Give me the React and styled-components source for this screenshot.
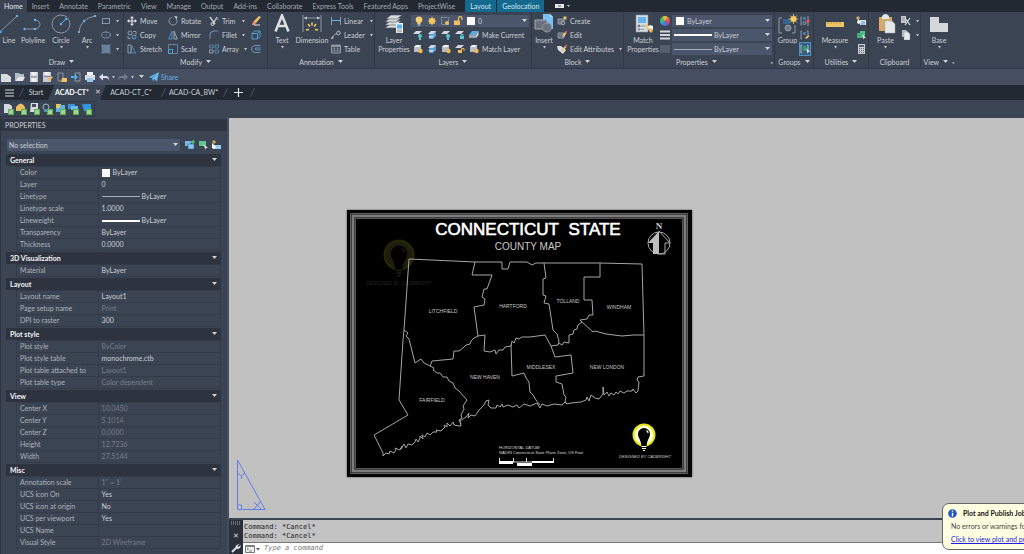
import React from 'react'
import styled, { createGlobalStyle, css } from 'styled-components'


/* every glyph is [box size, drawing] */
const glyphs = {
    line: [20, <><path d="M1 18 18 2" stroke="#8d96a3" fill="none"/><circle cx="1.5" cy="18" r="1.2" fill="#5fb2ec"/><circle cx="18" cy="2" r="1.2" fill="#5fb2ec"/></>],
    polyline: [20, <><path d="M1 15h11a5 4.5 0 0 0 0-9" stroke="#8d96a3" fill="none"/><g fill="#5fb2ec"><circle cx="1.5" cy="15" r="1.2"/><circle cx="12" cy="15" r="1.2"/><circle cx="12" cy="6" r="1.2"/></g></>],
    circle: [20, <><circle cx="10" cy="10" r="9" stroke="#8d96a3" fill="none"/><path d="m10 10 5-5" stroke="#5fb2ec"/><circle cx="10" cy="10" r="1.2" fill="#5fb2ec"/><circle cx="15" cy="5" r="1.2" fill="#5fb2ec"/></>],
    arc: [20, <><path d="M2 18Q3 5 18 2" stroke="#8d96a3" fill="none"/><g fill="#5fb2ec"><circle cx="2" cy="18" r="1.2"/><circle cx="7" cy="7" r="1.2"/><circle cx="18" cy="2" r="1.2"/></g></>],
    rect: [10, <><path d="M1.500 2.500h7v5h-7z" stroke="#8d96a3" fill="none"/><path d="M1 7h1v1H1zM8 2h1v1H8z" fill="#5fb2ec"/></>],
    ellipse: [10, <><ellipse cx="5" cy="5" rx="4.300" ry="3" stroke="#7d93a8" fill="none"/><path d="M4.500 4.500h1v1h-1zM9 4.500h1v1H9zM4.500 1.500h1v1h-1z" fill="#5fb2ec"/></>],
    hatch: [10, <><path d="M1 1h8v8H1z" fill="#55779b"/><path d="M1 3h8M1 5h8M1 7h8M3 1v8M5 1v8M7 1v8" stroke="#8090a3" strokeWidth=".5"/><path d="M0 1h10M0 9h10M1 0v10M9 0v10" stroke="#76879c" strokeWidth=".5"/></>],
    move: [10, <path d="M5 0 7 2.300H5.600v2.100h2.100V3L10 5 7.700 7V5.600H5.600v2.100H7L5 10 3 7.700h1.400V5.600H2.300V7L0 5l2.300-2v1.400h2.100V2.300H3z" fill="#e0e3e7"/>],
    copy: [10, <g fill="none"><circle cx="3" cy="3" r="2" stroke="#929ca8"/><circle cx="7" cy="7" r="2" stroke="#61a5d6"/><path d="M6 1.500h3v3M1 6v2.500h2.500" stroke="#929ca8"/></g>],
    stretch: [10, <g fill="none"><path d="M1 1h3v8H1z" stroke="#929ca8"/><path d="M4.500 1.500 8.500 9h-4z" stroke="#4f8dbb"/></g>],
    rotate: [10, <><path d="M8.500 3A4 4 0 1 1 4 1.200" stroke="#929ca8" fill="none"/><path d="m6 0 3.500.5-1 3z" fill="#c2c8d0"/></>],
    mirror: [10, <g fill="none"><path d="M4 1v8H.7z" stroke="#4f8dbb"/><path d="M6 1v8h3.300z" stroke="#a2abb6"/></g>],
    scale: [10, <g fill="none"><path d="M.5 5V.5h9v9H5" stroke="#62829f"/><path d="M.5 5.500h4v4h-4z" stroke="#55aae4"/></g>],
    trim: [10, <><path d="m1 1 5 7M8 1 4 8" stroke="#c2c8d0" strokeWidth="1.500"/><path d="M6 3h4" stroke="#8d96a3"/><circle cx="3.500" cy="8" r="1.500" stroke="#d8dce1" fill="none"/></>],
    fillet: [10, <><path d="M1 9V5q0-4 4-4h4" stroke="#75869a" fill="none"/><path d="M1 5q0-4 4-4" stroke="#5296c6" fill="none"/></>],
    array: [10, <g fill="none"><path d="M.5 1h3.500v3H.5zM6 1h3.500v3H6zM6 6h3.500v3H6z" stroke="#5684a8"/><path d="M.5 6h3.500v3H.5z" stroke="#949eab"/></g>],
    eraser: [10, <><path d="M2 6 8 0l2 1-5 6z" fill="#f0c064"/><path d="M1 7.500 3 5.500l2 1.700L3.500 9H1z" fill="#e88577"/><path d="M3 9h6" stroke="#e6e8eb"/></>],
    box: [10, <path d="M1 3.500h5.500V9H1zM1 3.500 3.500 1H9L6.500 3.500M9 1v5.500L6.500 9" stroke="#54a0d3" fill="none"/>],
    offset: [10, <path d="M9.500 1.500H4a3.500 3.500 0 0 0 0 7h5.500M9.500 4H5a1 1 0 0 0 0 2h4.500" stroke="#6b94b5" fill="none"/>],
    bigA: [20, <path d="m3.500 17.500 6.500-16 6.500 16M6 12h8" stroke="#dcdee1" strokeWidth="2.600" fill="none"/>],
    dimension: [20, <><path d="M1 1v17M19 1v17M2 4h16" stroke="#9098a4" fill="none"/><path d="m2 4 3-1.500v3zM18 4l-3-1.500v3z" fill="#c9ced4"/><path d="m4 16 3-.5M6 10l2 2.500M10 8.500v3M14 10l-2 2.500M16 16l-3-.5" stroke="#f2c75f" strokeWidth="1.600"/></>],
    linear: [10, <><path d="M.5 1v8M9.500 1v8" stroke="#929ca8"/><path d="M1 4.500h8" stroke="#5fb2ec"/></>],
    leader: [10, <><path d="M1 8 4 4h2" stroke="#929ca8" fill="none"/><circle cx="7.500" cy="3" r="1.800" stroke="#b6bcc5" fill="none"/><path d="M0 9.500 1 6l2 2z" fill="#b6bcc5"/></>],
    table: [10, <><path d="M.5 1h9v8h-9z" stroke="#8e98a5" fill="none"/><path d="M.5 1h9v2h-9z" fill="#8e98a5"/><path d="M.5 5h9M.5 7h9M3.500 3v6M6.500 3v6" stroke="#8e98a5" strokeWidth=".7"/></>],
    layers: [20, <><g fill="#d9dcdf" stroke="#4a5260" strokeWidth=".6"><path d="m1 14 5-4h11l-5 4z"/><path d="m1 11 5-4h11l-5 4z"/><path d="m1 8 5-4h11l-5 4z"/><path d="m2 5 5-4h11l-5 4z"/></g><path d="M12 9h7v10h-7z" fill="#eef0f2"/><path d="M13 10.500h5v4h-5z" fill="#55aef2"/><path d="M13 16h5M13 17.800h5" stroke="#7d8590" strokeWidth=".8"/></>],
    bulb: [10, <><circle cx="5" cy="3.700" r="3.300" fill="#f7cd71"/><path d="M3.500 6.500h3V8h-3z" fill="#f7cd71"/><path d="M3.500 9h3" stroke="#e3e6ea"/></>],
    sun: [10, <><circle cx="5" cy="5" r="3" fill="#f7c960"/><path d="M5 .5v9M.5 5h9M2 2l6 6M8 2 2 8" stroke="#f7c960" strokeWidth=".8"/></>],
    freeze: [10, <><path d="M1.500 1.500h7v7h-7z" stroke="#929ca8" fill="none" strokeDasharray="2 1"/><circle cx="7" cy="7" r="2" fill="#f2b763"/></>],
    unlock: [10, <><path d="M1 4.500h6V9H1z" fill="#f4bd66"/><path d="M5.500 4.500V2.300a1.700 1.700 0 0 1 3.400 0V4" stroke="#f4bd66" strokeWidth="1.200" fill="none"/></>],
    white: [10, <path d="M1 1h8v8H1z" fill="#fff"/>],
    layerCyan: [10, <><path d="m0 4 3-3h6L6 4z" fill="#d5d9dd"/><circle cx="7" cy="6" r="2" fill="#58c4cf"/><path d="M6 8h2v2H6z" fill="#58c4cf"/></>],
    layerBlue: [10, <><path d="M2 3 5 1h4v5L6 9H2z" fill="#5c9fd6"/><path d="m1 4 3-3h5L6 4zM1 7l2-1h4L5 8z" fill="#d5d9dd"/></>],
    layerLock: [10, <><path d="m0 4 3-3h6L6 4z" fill="#d5d9dd"/><path d="M5 6h4v3H5z" fill="#58c4cf"/><path d="M6 6V4.500h2V6" stroke="#58c4cf" fill="none"/></>],
    layerSun: [10, <><path d="m1 3 2-2h5v5L6 8H1z" fill="#b7bdc5"/><path d="m1 3 2-2h5L6 3z" fill="#eff1f3"/><circle cx="7.500" cy="7" r="2.200" fill="#f2b757"/></>],
    layerOpen: [10, <><path d="m0 4 3-3h6L6 4z" fill="#d5d9dd"/><path d="M3 6h4v3H3z" fill="#f2b757"/><path d="M6.500 6V4.500h2.500V7" stroke="#f2b757" fill="none"/></>],
    current: [10, <><path d="m0 5 3-4h6.500L7 5z" fill="#5ba7df"/><path d="M0 5h7v3H0z" fill="#9ba3ae"/><path d="m7 5 2.500-4v4L7 8z" fill="#d0d4d9"/></>],
    insert: [20, <><path d="M9 0h7l3 3v12H9z" fill="#7cc1f4"/><path d="M16 0v3h3z" fill="#b6def8"/><path d="M1 6h12v9H1z" fill="#69717e" stroke="#a4abb4"/><circle cx="13" cy="13.500" r="4.500" fill="#69717e" stroke="#929aa5"/></>],
    create: [10, <><path d="M1 3h6v5H1z" fill="#6c7582" stroke="#8d96a3"/><circle cx="6" cy="7" r="1.800" stroke="#a4abb4" fill="#515b69"/><path d="M8 0v4M6 2h4M6.700.7l2.600 2.600M9.300.7 6.700 3.300" stroke="#f4c767" strokeWidth=".9"/></>],
    edit: [10, <><path d="M1 3h6v5H1z" fill="#6c7582" stroke="#8d96a3"/><path d="m5 6 3-4 1.500 1L7 7z" fill="#f2c572"/><path d="m8 2 1-1.500L10.500 2l-1 1z" fill="#e45b4e"/></>],
    attributes: [10, <><path d="M0 2h4l5 4-3 4-5-4z" fill="#d9dde1"/><path d="m4 7 4-5 1.500 1-4 5z" fill="#f2c572"/><path d="m8 2 1-2 1.500 1-1 2z" fill="#e45b4e"/></>],
    match: [20, <><path d="M3 1h12v17H3z" fill="#d7dade" stroke="#8d949e" strokeWidth=".6"/><path d="M5 3h8v6H5z" fill="#66b4ef"/><path d="M5 11h2v2H5zM5 15h2v1H5zM8 12h5M8 15.500h3" fill="#70808f" stroke="#70808f" strokeWidth=".7"/><path d="m12 12 2-2 6 7-2 2z" fill="#efc261"/><path d="m14 13 3-2 3 1v4z" fill="#f1f2f3"/></>],
    lines: [10, <path d="M0 1.500h10M0 5h10M0 8.500h10" stroke="#d4d8dc" strokeWidth="2"/>],
    linetypes: [10, <path d="M0 2h10M0 4h10M0 6h10M0 8h10" stroke="#6f7987"/>],
    group: [20, <><path d="M4 4H1v15h3M14 19h3v-8" stroke="#929ca8" fill="none"/><path d="M5 5h7v5H5z" fill="#32658f"/><circle cx="10" cy="14" r="3" fill="#727b87" stroke="#929ca8"/><circle cx="15.500" cy="5" r="3" fill="#f6cb66"/><path d="M15.500 0v10M10.500 5h9.500M12 1.500l7 7M19 1.500l-7 7" stroke="#f6cb66" strokeWidth=".8"/></>],
    ungroup: [10, <><path d="M2 1H1v8h1" stroke="#929ca8" fill="none"/><path d="M3 1h3v3H3z" fill="#417ba8"/><circle cx="4.500" cy="7" r="1.500" stroke="#929ca8" fill="none"/><path d="M8 0v10" stroke="#929ca8"/><circle cx="8" cy="5" r="1.700" fill="#da5757"/></>],
    groupEdit: [10, <><path d="M2 1H1v8h1M7 1h1v5" stroke="#929ca8" fill="none"/><path d="M3 2h3v3H3z" fill="#417ba8"/><path d="m5 8 3-3 1.500 1-3 3z" fill="#f2b961"/></>],
    groupOn: [10, <><path d="M2 1H1v8h1M7 1h1v6" stroke="#b1bbc7" fill="none"/><path d="M3 2h3v5H3z" fill="#3a9b66"/><path d="m6 4 4 4H8v2z" fill="#fff"/></>],
    ruler: [20, <><path d="M1 8h18v5H1z" fill="#edc466"/><path d="M3 8v2M6 8v2M9 8v2M12 8v2M15 8v2" stroke="#a98639" strokeWidth=".7"/></>],
    point: [10, <><path d="M4 4h6v5H4z" fill="#dbe7f3"/><path d="M5 6h4M5 8h4" stroke="#4c90cc"/><path d="M0 2h4M2 0v4" stroke="#f3c563"/><path d="m2 3 3 3-2 2-2-1z" fill="#fff"/></>],
    quick: [10, <><path d="M1 3h6v5H1z" fill="#45b078"/><path d="M4 1h5v5H7V3H4z" fill="#4cc58a"/><path d="m6 4 4 4H8v2z" fill="#e9edf0"/></>],
    calc: [10, <><path d="M2 0h7v10H2z" fill="#c8ccd1"/><path d="M3 1h5v2H3zM3 4h1v1H3zM5 4h1v1H5zM7 4h1v1H7zM3 6h1v1H3zM5 6h1v1H5zM7 6h1v1H7zM3 8h1v1H3zM5 8h1v1H5zM7 8h1v1H7z" fill="#5e6672"/></>],
    paste: [20, <><path d="M3 3h13v14H3z" fill="#d4a96b"/><path d="M6 2q3.500-4 7 0v3H6z" fill="#e4e6e8"/><path d="M9 7h7l3 3v9H9z" fill="#e6e7e9" stroke="#a9afb7" strokeWidth=".5"/></>],
    cut: [10, <><path d="M0 0h5v7H0z" fill="#c6cad0"/><path d="m4 2 5 7M9 2 4 9" stroke="#dfe2e6" strokeWidth="1.200"/><path d="M1 2h3M1 4h3" stroke="#68717d" strokeWidth=".6"/></>],
    copyClip: [10, <><path d="M1 0h4l2 2v5H1z" fill="#b9bec5"/><path d="M3 2h4l2 2v6H3z" fill="#e6e8ea" stroke="#8c949e" strokeWidth=".4"/></>],
    base: [20, <path d="M1 3h9v6h9v9H1z" fill="#d5d8db"/>],
    newDoc: [10, <path d="M0 2h6l4 3v5H0z" fill="#d8dbdf"/>],
    open: [10, <><path d="M0 1h4l1 1h4v3H3L0 9z" fill="#b6bcc4"/><path d="M3 5h7L8 9H0z" fill="#e4e7ea"/></>],
    save: [10, <><path d="M1 0h8v10H1z" fill="#c6cbd1"/><path d="M2.500 0h5v3.500h-5zM2.500 6h5v4h-5z" fill="#eceef0"/><path d="M2 5h6" stroke="#818995"/></>],
    saveAs: [10, <><path d="M0 0h8v10H0z" fill="#c6cbd1"/><path d="M1.500 0h5v3h-5z" fill="#eceef0"/><path d="M1 4.500h6" stroke="#818995"/><path d="m4 8 4-4 2 1.500-4 4z" fill="#eeb767"/></>],
    mobileOpen: [10, <><path d="M1 1h5v8H1z" stroke="#8e98a4" fill="none"/><path d="M5 6h5v4H4z" fill="#efc365"/></>],
    mobileSave: [10, <><path d="M4 1h5v8H4z" stroke="#8e98a4" fill="none"/><path d="M0 4h4V2l3 3-3 3V6H0z" fill="#52ace7"/></>],
    print: [10, <><path d="M2 0h6v3H2z" fill="#eff1f3"/><path d="M0 3h10v5H0z" fill="#d9dce0"/><path d="M2 6h6v4H2z" fill="#92c9ee"/></>],
    undo: [10, <path d="M0 5 4 1.500V4h3q3 0 3 4-1-2-3-2H4v2.500z" fill="#dde0e4"/>],
    redo: [10, <path d="M10 5 6 1.500V4H3Q0 4 0 8q1-2 3-2h3v2.500z" fill="#727b8c"/>],
    send: [10, <path d="M0 5 10 0 8 9.500 5 7 4 9.500 3 6l5-4-6 4z" fill="#65b9ee"/>],
    grip: [10, <path d="M0 2h10M0 4h10" stroke="#a9afb8" strokeDasharray="1 1"/>],
    wrench: [10, <><path d="m1 9 4-4" stroke="#dfe2e6" strokeWidth="2"/><path d="m8.500 1-2 2 1 1 2-2c.6 2.500-1.200 4.200-3.500 4-2.300-.6-2.500-4 2.500-5z" fill="#dfe2e6"/></>],
    addSel: [10, <><path d="M0 1h6v5H0z" fill="#78b8ea"/><path d="M3 4h6v5H3z" fill="#86c7f5" stroke="#3b5675" strokeWidth=".5"/><path d="M6 2h4M8 0v4" stroke="#54c278" strokeWidth="1.300"/></>],
    pick: [10, <><path d="M1 1h7v5H1z" fill="#61c489"/><path d="m5 4 5 4H8v2z" fill="#e8ebee"/></>],
    ucs: [10, <><path d="M3 5h7v4H3z" fill="#9bc8ee"/><path d="M3 0v4M1 2h4" stroke="#efbd60"/><path d="m1 3 4 4-2 2-2-1z" fill="#fff"/></>],
    tbNew: [12, <><path d="M1 1h5l3 2v7H1z" fill="#d5d9df"/><path d="M5 6h6v6H5z" fill="#5aac50"/><path d="M6 8h4M6 10h4" stroke="#e5f6df"/></>],
    tbGold: [12, <><path d="M0 4q5-7 9 0v4H0z" fill="#efbd61"/><path d="M5 6h6v6H5z" fill="#5aac50"/><path d="M6 8h4M6 10h4" stroke="#e5f6df"/></>],
    tbPlot: [12, <><path d="M2 0h7v9H1z" fill="#d7dade"/><path d="M3 1h4v3H3z" fill="#46505c"/><path d="M5 6h6v6H5z" fill="#5aac50"/><path d="M6 8h4M6 10h4" stroke="#e5f6df"/></>],
    tbLens: [12, <><circle cx="4" cy="4" r="3" stroke="#9db5cc" fill="none"/><path d="M2 6h5v3H2z" fill="#538fc3"/><path d="M5 6h6v6H5z" fill="#5aac50"/><path d="M6 8h4M6 10h4" stroke="#e5f6df"/></>],
    tbPair: [12, <><path d="M1 1h5v4H1z" fill="#e3c85c"/><path d="M5 2h5v4H5zM1 5h4v4H1z" fill="#62aee7"/><path d="M5 6h6v6H5z" fill="#5aac50"/><path d="M6 8h4M6 10h4" stroke="#e5f6df"/></>],
    tbBlue: [12, <><path d="M0 1h7v5H0z" fill="#3992d8"/><path d="M3 3h7v4H3z" fill="#69b8ee"/><path d="M5 6h6v6H5z" fill="#5aac50"/><path d="M6 8h4M6 10h4" stroke="#e5f6df"/></>],
    tbScreen: [12, <><path d="M1 1h9v7H3z" fill="#2d96df"/><path d="M5 6h6v6H5z" fill="#5aac50"/><path d="M6 8h4M6 10h4" stroke="#e5f6df"/></>],
}

function Icon({ name }) {
    const [size, drawing] = glyphs[name]
    return <Glyph width={size} height={size} viewBox={`0 0 ${size} ${size}`} aria-hidden="true">{drawing}</Glyph>
}

function Caret() {
    return <Glyph width="5" height="4" viewBox="0 0 5 4" aria-hidden="true"><path d="M0 0h5L2.500 3z" fill="#d0d4d9"/></Glyph>
}

function DotCaret() {
    return <Glyph width="3" height="3" viewBox="0 0 3 3" aria-hidden="true"><path d="M0 0h3L1.500 2.500z" fill="#c0c5cc"/></Glyph>
}

function BigTool({ icon, lines, width, menu }) {
    return (
        <BigButton $width={width}>
            <Icon name={icon}/>
            <BigLabel>{lines.map(l => <span key={l}>{l}</span>)}</BigLabel>
            {menu && <DotCaret/>}
        </BigButton>
    )
}

function Tool({ icon, label, menu, title, active }) {
    return (
        <SmallButton aria-label={label ? undefined : title} $active={active}>
            <Icon name={icon}/>
            {label && <span>{label}</span>}
            {menu && <MenuMark><DotCaret/></MenuMark>}
        </SmallButton>
    )
}

function Panel({ title, width, pad, menu = true, launcher, children }) {
    return (
        <RibbonPanel $width={width}>
            <PanelBody $pad={pad}>{children}</PanelBody>
            <PanelTitle>
                {title}{menu && <Caret/>}
                {launcher && <Launcher>▪</Launcher>}
            </PanelTitle>
        </RibbonPanel>
    )
}

const ribbonTabs = ['Home', 'Insert', 'Annotate', 'Parametric', 'View', 'Manage', 'Output', 'Add-ins',
    'Collaborate', 'Express Tools', 'Featured Apps', 'ProjectWise']
const contextTabs = ['Layout', 'Geolocation']

function Ribbon() {
    return (
        <RibbonArea>
            <Panel title="Draw" width={124} pad={0}>
                <BigTool icon="line" lines={['Line']} width={18}/>
                <BigTool icon="polyline" lines={['Polyline']} width={30}/>
                <BigTool icon="circle" lines={['Circle']} width={26} menu/>
                <BigTool icon="arc" lines={['Arc']} width={26} menu/>
                <Column>
                    <Tool icon="rect" title="Rectangle" menu/>
                    <Tool icon="ellipse" title="Ellipse" menu/>
                    <Tool icon="hatch" title="Hatch" menu/>
                </Column>
            </Panel>
            <Panel title="Modify" width={144} pad={2}>
                <ModifyGrid>
                    <Tool icon="move" label="Move"/>
                    <Tool icon="rotate" label="Rotate"/>
                    <Tool icon="trim" label="Trim" menu/>
                    <Tool icon="eraser" title="Erase"/>
                    <Tool icon="copy" label="Copy"/>
                    <Tool icon="mirror" label="Mirror"/>
                    <Tool icon="fillet" label="Fillet" menu/>
                    <Tool icon="box" title="Explode"/>
                    <Tool icon="stretch" label="Stretch"/>
                    <Tool icon="scale" label="Scale"/>
                    <Tool icon="array" label="Array" menu/>
                    <Tool icon="offset" title="Offset"/>
                </ModifyGrid>
            </Panel>
            <Panel title="Annotation" width={107} pad={2}>
                <BigTool icon="bigA" lines={['Text']} width={24} menu/>
                <BigTool icon="dimension" lines={['Dimension']} width={36}/>
                <Column>
                    <Tool icon="linear" label="Linear" menu/>
                    <Tool icon="leader" label="Leader" menu/>
                    <Tool icon="table" label="Table"/>
                </Column>
            </Panel>
            <Panel title="Layers" width={157} pad={3}>
                <BigTool icon="layers" lines={['Layer', 'Properties']} width={32}/>
                <Column $gap={1} $grow>
                    <Field>
                        <FieldIcons>
                            <Icon name="bulb"/><Icon name="sun"/><Icon name="freeze"/><Icon name="unlock"/><Icon name="white"/>
                        </FieldIcons>
                        <Select aria-label="Current layer"><option>0</option></Select>
                        <Caret/>
                    </Field>
                    <LayerRow>
                        <Tool icon="layerCyan" title="Off"/>
                        <Tool icon="layerBlue" title="Isolate"/>
                        <Tool icon="layerCyan" title="Freeze"/>
                        <Tool icon="layerLock" title="Lock"/>
                        <Tool icon="current" label="Make Current"/>
                    </LayerRow>
                    <LayerRow>
                        <Tool icon="layerSun" title="Turn all layers on"/>
                        <Tool icon="layerBlue" title="Unisolate"/>
                        <Tool icon="layerSun" title="Thaw all layers"/>
                        <Tool icon="layerOpen" title="Unlock"/>
                        <Tool icon="layerSun" label="Match Layer"/>
                    </LayerRow>
                </Column>
            </Panel>
            <Panel title="Block" width={92} pad={2}>
                <BigTool icon="insert" lines={['Insert']} width={20} menu/>
                <Column $gap={2}>
                    <Tool icon="create" label="Create"/>
                    <Tool icon="edit" label="Edit"/>
                    <Tool icon="attributes" label="Edit Attributes" menu/>
                </Column>
            </Panel>
            <Panel title="Properties" width={151} pad={3} launcher>
                <BigTool icon="match" lines={['Match', 'Properties']} width={32}/>
                <Column $gap={1} $grow>
                    <PropLine>
                        <ColorWheel/>
                        <Field>
                            <FieldIcons><Icon name="white"/></FieldIcons>
                            <Select aria-label="Object color"><option>ByLayer</option></Select>
                            <Caret/>
                        </Field>
                    </PropLine>
                    <PropLine>
                        <Icon name="lines"/>
                        <Field>
                            <Rule $thick/>
                            <Select aria-label="Lineweight"><option>ByLayer</option></Select>
                            <Caret/>
                        </Field>
                    </PropLine>
                    <PropLine>
                        <Icon name="linetypes"/>
                        <Field>
                            <Rule/>
                            <Select aria-label="Linetype"><option>ByLayer</option></Select>
                            <Caret/>
                        </Field>
                    </PropLine>
                </Column>
            </Panel>
            <Panel title="Groups" width={39} pad={2}>
                <BigTool icon="group" lines={['Group']} width={21}/>
                <Column $gap={1}>
                    <Tool icon="ungroup" title="Ungroup"/>
                    <Tool icon="groupEdit" title="Group edit"/>
                    <Tool icon="groupOn" title="Group selection" active/>
                </Column>
            </Panel>
            <Panel title="Utilities" width={55} pad={5}>
                <BigTool icon="ruler" lines={['Measure']} width={32} menu/>
                <Column $gap={4}>
                    <Tool icon="point" title="ID point"/>
                    <Tool icon="quick" title="Quick select"/>
                    <Tool icon="calc" title="Calculator"/>
                </Column>
            </Panel>
            <Panel title="Clipboard" width={52} pad={6} menu={false}>
                <BigTool icon="paste" lines={['Paste']} width={21} menu/>
                <Column $gap={4}>
                    <Tool icon="cut" title="Cut" menu/>
                    <Tool icon="copyClip" title="Copy clip" menu/>
                </Column>
            </Panel>
            <Panel title="View" width={36} pad={6} launcher>
                <BigTool icon="base" lines={['Base']} width={24} menu/>
            </Panel>
        </RibbonArea>
    )
}

const sections = [
    { name: 'General', rows: [
        ['Color', 'ByLayer', 'swatch'], ['Layer', '0'], ['Linetype', 'ByLayer', 'thin'], ['Linetype scale', '1.0000'],
        ['Lineweight', 'ByLayer', 'thick'], ['Transparency', 'ByLayer'], ['Thickness', '0.0000']] },
    { name: '3D Visualization', rows: [['Material', 'ByLayer']] },
    { name: 'Layout', rows: [['Layout name', 'Layout1'], ['Page setup name', 'Print', 'dim'], ['DPI to raster', '300']] },
    { name: 'Plot style', rows: [
        ['Plot style', 'ByColor', 'dim'], ['Plot style table', 'monochrome.ctb'],
        ['Plot table attached to', 'Layout1', 'dim'], ['Plot table type', 'Color dependent', 'dim']] },
    { name: 'View', rows: [
        ['Center X', '10.0450', 'dim'], ['Center Y', '5.1014', 'dim'], ['Center Z', '0.0000', 'dim'],
        ['Height', '12.7236', 'dim'], ['Width', '27.5144', 'dim']] },
    { name: 'Misc', rows: [
        ['Annotation scale', '1" = 1\'', 'dim'], ['UCS icon On', 'Yes'], ['UCS icon at origin', 'No'],
        ['UCS per viewport', 'Yes'], ['UCS Name', ''], ['Visual Style', '2D Wireframe', 'dim']] },
]

function Properties() {
    return (
        <Palette>
            <PaletteTitle>PROPERTIES</PaletteTitle>
            <Picker>
                <Field>
                    <Select aria-label="Selection"><option>No selection</option></Select>
                    <Caret/>
                </Field>
                <Tool icon="addSel" title="Toggle pickadd"/>
                <Tool icon="pick" title="Select objects"/>
                <Tool icon="ucs" title="Quick select"/>
            </Picker>
            <Sections>
                {sections.map(s => (
                    <section key={s.name}>
                        <SectionHead>{s.name}<Caret/></SectionHead>
                        <PropTable>
                            <tbody>
                                {s.rows.map(([label, value, kind]) => (
                                    <tr key={label}>
                                        <th scope="row">{label}</th>
                                        <Value $dim={kind === 'dim'}>
                                            <ValueLine>
                                                {kind === 'swatch' && <Swatch/>}
                                                {kind === 'thin' && <Rule/>}
                                                {kind === 'thick' && <Rule $thick/>}
                                                {value}
                                            </ValueLine>
                                        </Value>
                                    </tr>
                                ))}
                            </tbody>
                        </PropTable>
                    </section>
                ))}
            </Sections>
        </Palette>
    )
}

const counties = [
    ['LITCHFIELD', 443, 313], ['HARTFORD', 513, 308], ['TOLLAND', 568, 303], ['WINDHAM', 619, 309],
    ['NEW HAVEN', 485, 379], ['MIDDLESEX', 541, 369], ['NEW LONDON', 607, 369], ['FAIRFIELD', 432, 402],
]

// state outline first, then the coast and the county lines
const borders = [
    'M383 456V453L374 435L408 415L399 400L403 340L404 330L409 259L475 262H502V269L508 269L510 262H527L532 265L536 263L600 263L642 264L644 335V376L638 377L637 380L639 382L638 391',
    'M383 456L386 453L389 454L390 451L394 453L396 450L395 448L400 450L402 446L401 449L404 444L406 448L408 444L412 445L415 442L416 439L418 442L420 438L420 436L423 439L422 435L425 437L427 433L430 435L433 432L437 432L436 430L441 431L445 427L444 425L447 427L447 423L450 426L453 422L454 425L459 426H461L460 421L466 417L469 413L468 418L471 415L475 416L479 410L484 405L486 401L489 400L488 405L491 408L496 408L497 405L500 407L502 404L503 407L508 405L513 407L517 405L519 408L524 404L530 406L537 403L540 408L542 404L547 406L554 404L562 405L565 402L567 404L571 403L581 402L586 400L587 397L589 401L591 395L595 398L599 399L603 394V387L604 395L607 392L609 396L611 393L614 395L616 392L618 394L620 391L624 393L627 391L632 391L633 389L636 393L638 391',
    'M475 262L472 275H492L487 289L484 289L482 297L485 299L484 305L474 307L478 336L485 335L484 351L490 352L495 350L496 354L499 350L503 350L505 347L511 346L512 341L514 343L516 338L519 339L522 337L530 337L545 335L551 346L555 357L571 355L573 373L556 376V382L562 384L564 395L566 397L565 401L567 404',
    'M478 336L474 338L471 341L470 344L466 345L463 348L459 351H454L453 359L432 361L430 366L434 368L433 370L437 373L440 373L443 377L447 377L449 381L453 383L455 388L459 391L467 400L463 406L464 409L461 415L462 418L459 420L461 424',
    'M404 330L408 333L406 336L409 339L415 363L418 361L421 359L424 363L430 366',
    'M544 263L546 278L543 279V295L546 296L544 303L549 304L553 330L557 334L559 341L558 345L551 346M559 343L562 345L564 342L569 343L569 335L573 334L574 330L577 329L578 325L582 322L580 320L587 319L589 315L593 315L592 300H584V277H600V263',
    'M582 322L593 332L595 331L606 334L622 336L633 335H644',
    'M511 345L512 376L524 373L526 378L529 382L530 392L533 395L536 400L540 405',
]

function Bulb({ x, y, scale, ring, glow, core }) {
    return (
        <g transform={`translate(${x} ${y}) scale(${scale})`}>
            <circle r="10.500" fill={glow} stroke={ring} strokeWidth="2"/>
            <path d="M-6-1a6 6 0 0 1 12 0c0 4-3 5-3.500 13h-5C-3 4-6 3-6-1z" fill={core}/>
            <path d="M-2.500 11.500h5M-2 13.500h4M-1 15.500h2M2.500-4.500q1.500 1 1.500 2.500" stroke={glow} strokeWidth="1.200" fill="none"/>
        </g>
    )
}

function Sheet() {
    return (
        <Paper viewBox="347 210 345 267" role="img" aria-label="Connecticut State county map">
            <path d="M347 210h345v267H347z" fill="#050505"/>
            <path d="M350.500 213.500h337v260h-337z" fill="none" stroke="#606060"/>
            <path d="M353 216h332v255H353z" fill="none" stroke="#7c7c7c" strokeWidth="3"/>
            <path d="M355.500 218.500h327v250h-327z" fill="#000" stroke="#555"/>
            <Bulb x={399} y={255} scale={1.350} ring="#262600" glow="#1c1c14" core="#000"/>
            <MapNote x="366" y="285" $size={5} $fill="#262626" $slant>DESIGNED BY CADBRIGHT</MapNote>
            {borders.map(d => <path key={d} d={d} fill="none" stroke="#a6a6a6"/>)}
            <MapTitle x="528" y="235" $size={17} stroke="#fff" strokeWidth=".6" xmlSpace="preserve">{'CONNECTICUT\u00a0 STATE'}</MapTitle>
            <MapTitle x="528" y="250" $size={10} $soft>COUNTY MAP</MapTitle>
            {counties.map(([name, x, y]) => <MapTitle key={name} x={x} y={y} $size={5} $soft>{name}</MapTitle>)}
            <North x="659" y="229">N</North>
            <circle cx="659" cy="243" r="11" fill="none" stroke="#aaa"/>
            <path d="M659 231v23h-6v-11h-5z" fill="#bdbdbd"/>
            <path d="M659 231l11 12h-5v11h-6" fill="none" stroke="#aaa"/>
            <MapNote x="499" y="449" $size={4} $fill="#ddd">HORIZONTAL DATUM:</MapNote>
            <MapNote x="499" y="454" $size={4} $fill="#ddd">NAD83 Connecticut State Plane Zone, US Foot</MapNote>
            <path d="M499.500 458v4h54v-4M513.500 458v4M526.500 458v4" fill="none" stroke="#ddd"/>
            <path d="M499 461h14v3h-14zM517 463h15v3h-15zM532 461h22v2h-22z" fill="#fff"/>
            <Bulb x={644} y={435} scale={1} ring="#e5e516" glow="#ffffd2" core="#000"/>
            <MapNote x="619" y="458" $size={4} $fill="#ccc" $slant>DESIGNED BY CADBRIGHT</MapNote>
        </Paper>
    )
}

function App() {
    return (
        <Window>
            <Global/>
            <TabBar>
                {ribbonTabs.map((t, i) => <RibbonTab key={t} $on={i === 0}>{t}</RibbonTab>)}
                <ContextTabs>
                    {contextTabs.map(t => <RibbonTab key={t} $blue>{t}</RibbonTab>)}
                </ContextTabs>
                <Glyph width="16" height="6" viewBox="0 0 16 6"><path d="M0 1h9v4H0z" fill="#e5e7ea"/><path d="M3 3h3" stroke="#55606e"/><path d="M12 2h3L13.500 4z" fill="#c0c5cc"/></Glyph>
            </TabBar>
            <Ribbon/>
            <QuickBar>
                {['newDoc', 'open', 'save', 'saveAs', 'mobileOpen', 'mobileSave', 'print', 'undo'].map(n => (
                    <Tool key={n} icon={n} title={n}/>
                ))}
                <DotCaret/>
                <Tool icon="redo" title="redo"/>
                <DotCaret/>
                <Caret/>
                <Share><Icon name="send"/>Share</Share>
            </QuickBar>
            <FileBar>
                <Glyph width="9" height="8" viewBox="0 0 9 8"><path d="M0 1h9M0 4h9M0 7h9" stroke="#d5d9de"/></Glyph>
                <Slash/>
                <FileTab $width={18}>Start</FileTab>
                <FileTab $width={58} $on>ACAD-CT* <Close>✕</Close></FileTab>
                <FileTab $width={50}>ACAD-CT_C*</FileTab>
                <Slash/>
                <FileTab $width={49}>ACAD-CA_BW*</FileTab>
                <Slash/>
                <FileTab $width={14} aria-label="New drawing">
                    <Glyph width="9" height="9" viewBox="0 0 9 9"><path d="M0 4.500h9M4.500 0v9" stroke="#e3e6ea" strokeWidth="1.200"/></Glyph>
                </FileTab>
                <Slash/>
            </FileBar>
            <ToolStrip>
                <StripGroup>
                    {['tbNew', 'tbGold', 'tbPlot', 'tbLens', 'tbPair', 'tbBlue', 'tbScreen'].map(n => (
                        <Tool key={n} icon={n} title={n}/>
                    ))}
                </StripGroup>
            </ToolStrip>
            <Workspace>
                <Properties/>
                <Drawing>
                    <Canvas>
                        <Sheet/>
                        <UcsMark viewBox="0 0 30 52">
                            <path d="M1.500 1v49.500H29z M1.500 46h4v4.500M1.500 14l4 3L9 14M5.500 17v3M18 43l7 7M25 42l-7 8" fill="none" stroke="#5f7ee6"/>
                        </UcsMark>
                    </Canvas>
                    <CommandArea>
                        <CommandSide>
                            <Icon name="grip"/>
                            <Close>✕</Close>
                            <Icon name="wrench"/>
                        </CommandSide>
                        <CommandMain>
                            <History><span>Command: *Cancel*</span><span>Command: *Cancel*</span></History>
                            <Prompt>
                                <Glyph width="15" height="8" viewBox="0 0 15 8"><path d="M.5.5h9v7h-9z" fill="#eee" stroke="#777"/><path d="M.5 1.500h9" stroke="#888"/><path d="M2 3l1.500 1L2 5M4 6h3" fill="none" stroke="#555" strokeWidth=".7"/><path d="M11 3h4l-2 2.500z" fill="#555"/></Glyph>
                                <CommandInput aria-label="Command" placeholder="Type a command"/>
                            </Prompt>
                        </CommandMain>
                    </CommandArea>
                </Drawing>
            </Workspace>
            <Balloon role="status">
                <BalloonTitle>
                    <Glyph width="9" height="9" viewBox="0 0 9 9"><circle cx="4.500" cy="4.500" r="4.300" fill="#2457c5"/><path d="M4.500 1.500v1.300M4.500 3.700v3.800" stroke="#fff" strokeWidth="1.400"/></Glyph>
                    Plot and Publish Job Complete
                </BalloonTitle>
                <span>No errors or warnings found</span>
                <a href="#details">Click to view plot and publish details...</a>
            </Balloon>
        </Window>
    )
}

export default App


const Global = createGlobalStyle`
            body {
                margin: 0;
                background: #3b4453;
            }

            * {
                box-sizing: border-box;
            }

            button, input, select {
                font: inherit;
                color: inherit;
                border: 0;
                padding: 0;
                margin: 0;
                background: none;
            }

            button {
                cursor: pointer;
                white-space: nowrap;
            }
`

const Glyph = styled.svg`
            display: block;
            flex: none;
`

const Window = styled.div`
            position: relative;
            display: flex;
            flex-direction: column;
            min-height: 100vh;
            overflow: hidden;
            background: #3b4453;
            color: #ccd0d6;
            font-family: Lato, "Open Sans", sans-serif;
            font-size: 7px;
            line-height: 9px;
`

const TabBar = styled.nav`
            display: flex;
            align-items: center;
            height: 12px;
            background: #222932;
            color: #a4aab3;
`

const RibbonTab = styled.button`
            height: 12px;
            padding: 0 5px;

            ${p => p.$on && css`
                background: #3b4453;
                color: #e4e7ea;
                padding: 0 4px;
            `}
            ${p => p.$blue && css`
                background: #14698f;
                color: #d5e6f0;
            `}
`

const ContextTabs = styled.div`
            display: flex;
            gap: 1px;
            margin: 0 11px 0 5px;
`

const RibbonArea = styled.div`
            display: flex;
            height: 57px;
            border-bottom: 1px solid #303846;
`

const RibbonPanel = styled.section`
            display: flex;
            flex-direction: column;
            flex: none;
            width: ${p => p.$width}px;
            border-right: 1px solid #303846;

            &:last-child {
                border-right: 0;
            }
`

const PanelBody = styled.div`
            display: flex;
            height: 44px;
            padding: 2px 0 0 ${p => p.$pad}px;
`

const PanelTitle = styled.div`
            display: flex;
            align-items: center;
            justify-content: center;
            gap: 4px;
            height: 12px;
`

const Launcher = styled.span`
            font-size: 6px;
            color: #aab0b9;

            ${RibbonPanel}:not(:last-child) & {
                margin-left: auto;
                margin-right: 1px;
            }

            ${RibbonPanel}:not(:last-child) ${PanelTitle}:has(&) {
                padding-left: 52px;
            }
`

const BigButton = styled.button`
            display: flex;
            flex-direction: column;
            align-items: center;
            flex: none;
            width: ${p => p.$width}px;
            height: 42px;
`

const BigLabel = styled.span`
            display: flex;
            flex-direction: column;
            align-items: center;
            margin: 2px 0 1px;
`

const Column = styled.div`
            display: flex;
            flex-direction: column;
            padding-left: ${p => p.$gap || 0}px;
            ${p => p.$grow && 'flex: 1; padding-right: 2px;'}
`

const SmallButton = styled.button`
            display: flex;
            align-items: center;
            gap: 3px;
            height: 14px;
            padding: 0 1px;

            ${p => p.$active && css`
                background: #355f80;
                outline: 1px solid #4d93c4;
                outline-offset: -1px;
            `}
`

const MenuMark = styled.span`
            margin-left: auto;
            padding-left: 2px;
`

const ModifyGrid = styled.div`
            display: grid;
            grid-template-columns: 41px 41px 38px 12px;
            grid-auto-rows: 14px;

            ${SmallButton}:nth-child(4n) {
                margin-left: 4px;
            }
`

const LayerRow = styled.div`
            display: flex;
            gap: 2px;
            padding-left: 1px;
`

const Field = styled.div`
            display: flex;
            align-items: center;
            flex: 1;
            min-width: 0;
            min-height: 12px;
            max-height: 12px;
            padding: 0 2px;
            margin: 1px 0;
            background: #4b566a;
`

const FieldIcons = styled.span`
            display: flex;
            gap: 3px;
            padding-left: 1px;
            margin-right: 2px;
`

const Select = styled.select`
            flex: 1;
            min-width: 0;
            appearance: none;
            outline: none;
`

const PropLine = styled.div`
            display: flex;
            align-items: center;
            gap: 2px;
            height: 14px;
`

const ColorWheel = styled.span`
            width: 10px;
            height: 10px;
            flex: none;
            border-radius: 50%;
            background: conic-gradient(#e9c84a, #e8703a, #d84378, #7759c9, #3d86d8, #36b5a2, #58bb55, #e9c84a);
`

const Rule = styled.span`
            flex: none;
            width: 38px;
            height: ${p => p.$thick ? 2 : 1}px;
            background: ${p => p.$thick ? '#fff' : '#a9afb8'};
            margin-right: 2px;
`

const QuickBar = styled.div`
            display: flex;
            align-items: center;
            gap: 2px;
            height: 16px;
            background: #464e61;

            svg + svg {
                margin-left: 3px;
            }
`

const Share = styled.button`
            display: flex;
            align-items: center;
            gap: 2px;
            padding-left: 3px;
            color: #65b0e2;
`

const FileBar = styled.nav`
            display: flex;
            align-items: center;
            height: 15px;
            padding-left: 5px;
            background: #222932;
`

const Slash = styled.span`
            width: 1px;
            height: 9px;
            margin: 0 5px 0 7px;
            background: #4a525e;
            transform: skewX(-25deg);
`

const FileTab = styled.button`
            display: flex;
            align-items: center;
            justify-content: center;
            gap: 6px;
            height: 15px;
            min-width: ${p => p.$width}px;

            ${p => p.$on && css`
                margin-left: 3px;
                padding-left: 2px;
                background: #3b4453;
                color: #fff;
                font-weight: 700;
                clip-path: polygon(6px 0, 100% 0, calc(100% - 6px) 100%, 0 100%);
            `}
`

const Close = styled.span`
            font-family: "DejaVu Sans", sans-serif;
            font-weight: 400;
            color: #d5d8dc;
`

const ToolStrip = styled.div`
            display: flex;
            height: 17px;
            padding-top: 1px;
`

const StripGroup = styled.div`
            display: flex;
            align-items: center;
            height: 16px;
            padding: 0 1px 0 2px;
            border: 1px solid #303846;
            border-left: 0;

            ${SmallButton} {
                padding: 0 0 0 1px;
            }
`

const Workspace = styled.div`
            display: grid;
            grid-template-columns: 229px 1fr;
            flex: 1;
`

const Palette = styled.aside`
            padding-top: 2px;
            border-left: 1px solid #2d3440;
            border-right: 2px solid #424f60;
`

const PaletteTitle = styled.h2`
            margin: 0;
            padding: 0 4px;
            height: 12px;
            font-size: 7px;
            line-height: 12px;
            font-weight: 400;
            background: #2f3541;
`

const Picker = styled.div`
            display: flex;
            align-items: center;
            gap: 1px;
            padding: 7px 5px 2px 6px;

            ${Field} {
                margin-right: 3px;
            }
`

const Sections = styled.div`
            display: flex;
            flex-direction: column;
            gap: 1px;
            padding: 0 6px 0 5px;
`

const SectionHead = styled.button`
            display: flex;
            align-items: center;
            justify-content: space-between;
            width: 100%;
            height: 12px;
            padding: 0 4px;
            background: #2d333f;
            color: #f4f5f6;
            font-weight: 700;
`

const PropTable = styled.table`
            width: calc(100% - 10px);
            margin-left: 10px;
            table-layout: fixed;
            border-collapse: collapse;

            tr {
                height: 12px;
            }

            th, td {
                height: 12px;
                padding: 0 0 0 3px;
                border: 1px solid #343c49;
                line-height: 9px;
                text-align: left;
                white-space: nowrap;
            }

            th {
                width: 40%;
                font-weight: 400;
                color: #aeb4bd;
            }
`

const Value = styled.td`
            color: ${p => p.$dim ? '#767e8a' : '#ccd0d6'};
`

const ValueLine = styled.div`
            display: flex;
            align-items: center;
            min-height: 9px;
`

const Swatch = styled.span`
            width: 8px;
            height: 8px;
            margin-right: 3px;
            background: #fff;
`

const Drawing = styled.main`
            display: flex;
            flex-direction: column;
            min-width: 0;
`

const Canvas = styled.div`
            display: flex;
            align-items: flex-start;
            flex: 1;
            padding: 92px 8px 8px 118px;
            margin-top: 1px;
            background: #c1c1c1;
            position: relative;
`

const Paper = styled.svg`
            flex: 0 1 345px;
            min-width: 0;
            box-shadow: 0 0 2px #555;
`

/* viewport marker lies over the sheet area */
const UcsMark = styled.svg`
            position: absolute;
            left: 7px;
            bottom: 7px;
            width: 30px;
            height: 52px;
`

const MapTitle = styled.text`
            font-family: "Liberation Sans", Arial, sans-serif;
            font-size: ${p => p.$size}px;
            text-anchor: middle;
            fill: ${p => p.$soft ? '#c8c8c8' : '#fff'};
`

const MapNote = styled.text`
            font-family: "Liberation Sans", Arial, sans-serif;
            font-size: ${p => p.$size}px;
            font-style: ${p => p.$slant ? 'italic' : 'normal'};
            fill: ${p => p.$fill};
`

const North = styled.text`
            font: 700 9px "Liberation Serif", serif;
            text-anchor: middle;
            fill: #ccc;
`

const CommandArea = styled.div`
            display: flex;
            border-top: 2px solid #3b4453;
`

const CommandSide = styled.div`
            display: flex;
            flex-direction: column;
            align-items: center;
            justify-content: space-between;
            width: 14px;
            padding-bottom: 1px;
            background: #2b313c;
`

const CommandMain = styled.div`
            flex: 1;
            background: #c3c3c3;
            color: #222;
            font-family: "DejaVu Sans Mono", monospace;
`

const History = styled.div`
            display: flex;
            flex-direction: column;
            padding: 3px 1px 1px;
`

const Prompt = styled.label`
            display: flex;
            align-items: center;
            gap: 4px;
            height: 12px;
            padding-left: 2px;
            background: #fff;
            border-top: 1px solid #777;
`

const CommandInput = styled.input`
            flex: 1;
            outline: none;

            &::placeholder {
                color: #777;
                font-style: italic;
            }
`

/* hangs off the right edge of the window */
const Balloon = styled.div`
            position: absolute;
            right: -62px;
            bottom: 4px;
            display: flex;
            flex-direction: column;
            gap: 4px;
            width: 144px;
            padding: 5px 8px;
            border: 1px solid #666;
            border-radius: 7px;
            background: #ffffe1;
            color: #444;
            white-space: nowrap;

            a {
                color: #2020e0;
            }
`

const BalloonTitle = styled.strong`
            display: flex;
            align-items: center;
            gap: 6px;
            margin-left: -3px;
            color: #111;
`
